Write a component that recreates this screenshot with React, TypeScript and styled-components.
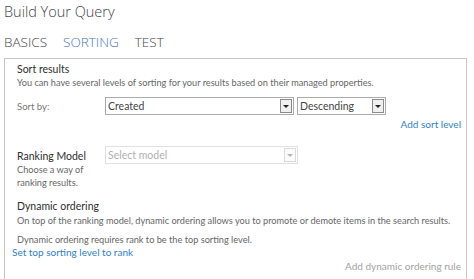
import React from 'react';
import styled, { createGlobalStyle } from 'styled-components';

const GlobalStyle = createGlobalStyle`
	html, body {
		margin: 0;
		padding: 0;
		background: #ffffff;
	}

	body {
		font-family: 'Lato', 'Open Sans', sans-serif;
		color: #444444;
	}
`;

const Page = styled.div`
	width: 474px;
	height: 279px;
	overflow: hidden;
	padding: 0 7px 0 4px;
	box-sizing: border-box;
`;

const Title = styled.h1`
	margin: 0;
	height: 24px;
	font-family: 'Open Sans', sans-serif;
	font-size: 14.5px;
	font-weight: 300;
	color: #444444;
	line-height: 24px;
`;

const Tabs = styled.div`
	display: flex;
	gap: 16px;
	height: 18px;
	align-items: center;
	margin-top: 9px;
	margin-bottom: 7px;
`;

const Tab = styled.span<{ $active?: boolean }>`
	font-family: 'Open Sans', sans-serif;
	font-size: 13.5px;
	font-weight: 300;
	color: ${(p) => (p.$active ? '#4a78c2' : '#444444')};
`;

const Panel = styled.div`
	border: 1px solid #c6c6c6;
	border-bottom: none;
	padding: 4px 4px 0 12px;
	height: 240px;
`;

const Heading = styled.div`
	font-size: 10.5px;
	color: #2e2e2e;
	line-height: 13px;
`;

const Desc = styled.div<{ $top?: number }>`
	font-size: 9.2px;
	color: #666666;
	line-height: 13px;
	margin-top: ${(p) => p.$top ?? 0}px;
	white-space: nowrap;
`;

const Row = styled.div`
	display: flex;
	align-items: center;
	margin-top: 8px;
`;

const Label = styled.div`
	width: 88px;
	font-size: 9.5px;
	color: #777777;
`;

const Select = styled.div<{ $width: number; $disabled?: boolean }>`
	width: ${(p) => p.$width}px;
	height: 18px;
	box-sizing: border-box;
	border: 1px solid ${(p) => (p.$disabled ? '#e1e1e1' : '#ababab')};
	display: flex;
	align-items: center;
	justify-content: space-between;
	padding: 0 1px 0 2px;
	font-size: 10.5px;
	color: ${(p) => (p.$disabled ? '#b1b1b1' : '#444444')};
	margin-right: 3px;
	background: #ffffff;
	flex-shrink: 0;
`;

const Arrow = styled.span<{ $disabled?: boolean }>`
	width: 12px;
	height: 14px;
	box-sizing: border-box;
	border: 1px solid ${(p) => (p.$disabled ? '#dadada' : '#8a8a8a')};
	background: ${(p) => (p.$disabled ? '#fbfbfb' : '#f0f0f0')};
	display: flex;
	align-items: center;
	justify-content: center;

	&::after {
		content: '';
		border-left: 3px solid transparent;
		border-right: 3px solid transparent;
		border-top: 3px solid ${(p) => (p.$disabled ? '#b5b5b5' : '#222222')};
	}
`;

const RightLink = styled.div<{ $muted?: boolean; $top?: number }>`
	text-align: right;
	font-size: 10px;
	line-height: 13px;
	color: ${(p) => (p.$muted ? '#a2a2a2' : '#2f7fc8')};
	padding-right: 1px;
	margin-top: ${(p) => p.$top ?? 0}px;
`;

const Link = styled.div`
	font-size: 10px;
	color: #2f7fc8;
	margin-left: -5px;
	line-height: 13px;
`;

const RankRow = styled.div`
	display: flex;
	align-items: flex-start;
	margin-top: 15px;
	margin-bottom: 11px;
`;

const RankText = styled.div`
	width: 88px;
	padding-top: 4px;
	flex-shrink: 0;
`;

export default function App() {
	return (
		<Page>
			<GlobalStyle />
			<Title>Build Your Query</Title>
			<Tabs>
				<Tab>BASICS</Tab>
				<Tab $active>SORTING</Tab>
				<Tab>TEST</Tab>
			</Tabs>
			<Panel>
				<Heading>Sort results</Heading>
				<Desc>You can have several levels of sorting for your results based on their managed properties.</Desc>
				<Row>
					<Label>Sort by:</Label>
					<Select $width={189}>
						Created
						<Arrow />
					</Select>
					<Select $width={89}>
						Descending
						<Arrow />
					</Select>
				</Row>
				<RightLink $top={3}>Add sort level</RightLink>
				<RankRow>
					<RankText>
						<Heading>Ranking Model</Heading>
						<Desc>Choose a way of</Desc>
						<Desc>ranking results.</Desc>
					</RankText>
					<Select $width={193} $disabled>
						Select model
						<Arrow $disabled />
					</Select>
				</RankRow>
				<Heading>Dynamic ordering</Heading>
				<Desc $top={1}>On top of the ranking model, dynamic ordering allows you to promote or demote items in the search results.</Desc>
				<Desc $top={6}>Dynamic ordering requires rank to be the top sorting level.</Desc>
				<Link>Set top sorting level to rank</Link>
				<RightLink $muted $top={1}>
					Add dynamic ordering rule
				</RightLink>
			</Panel>
		</Page>
	);
}
